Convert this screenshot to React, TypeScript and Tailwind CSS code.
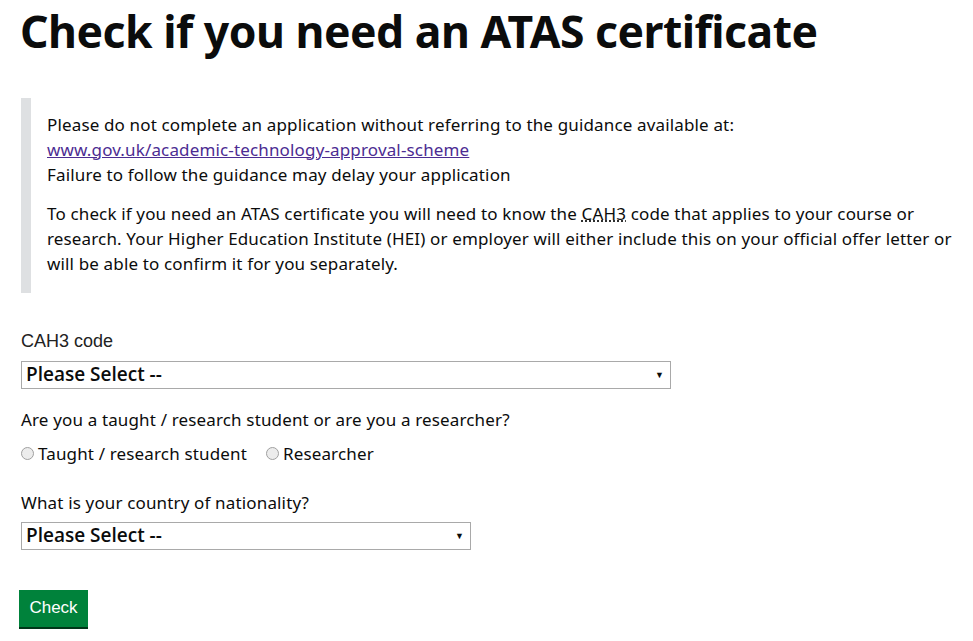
export default function App() {
  const body = { fontFamily: '"Noto Sans", Arial, sans-serif' };
  const arial = { fontFamily: '"Liberation Sans", Arial, sans-serif' };
  const sel = { fontFamily: '"Open Sans", sans-serif' };
  return (
    <div className="bg-white min-h-[641px] text-[#0b0c0c]" style={body}>
      <div className="pl-[20px] pr-[14px]">
        <h1 className="text-[44.5px] font-bold leading-[1] pt-[9px] tracking-[-0.5px] m-0">Check if you need an ATAS certificate</h1>
        <div className="mt-[44px] ml-[1px] border-l-[10px] border-[#dee0e2] pl-[16px] pt-[14px] pb-[17px] text-[17px] leading-[25px] tracking-[0.15px]">
          <p>
            Please do not complete an application without referring to the guidance available at:
            <br />
            <a href="#" className="text-[#4c2c92] underline">www.gov.uk/academic-technology-approval-scheme </a>
            <br />
            Failure to follow the guidance may delay your application
          </p>
          <p className="mt-[14px]">
            To check if you need an ATAS certificate you will need to know the{" "}
            <abbr className="underline decoration-dotted">CAH3</abbr> code that applies to your course or research. Your Higher Education Institute (HEI) or employer will either include this on your official offer letter or will be able to confirm it for you separately.
          </p>
        </div>
        <div className="mt-[36px] ml-[1px]">
          <label className="block text-[18px] leading-[25px] text-[#222]" style={arial}>CAH3 code</label>
          <div className="mt-[7px] w-[650px] h-[28px] border border-[#a9a9a9] flex items-center justify-between pl-[4px] pr-[6px]">
            <span className="text-[19px] font-semibold" style={sel}>Please Select --</span>
            <span className="text-[9px]">▼</span>
          </div>
          <div className="text-[17px] leading-[25px] tracking-[0.15px]">
            <p className="mt-[18px]">Are you a taught / research student or are you a researcher?</p>
            <div className="mt-[9px] flex items-center">
              <span className="w-[13px] h-[13px] rounded-full border border-[#a0a0a0] bg-[#ececec] mr-[4px]"></span>
              <span>Taught / research student</span>
              <span className="w-[13px] h-[13px] rounded-full border border-[#a0a0a0] bg-[#ececec] ml-[19px] mr-[4px]"></span>
              <span>Researcher</span>
            </div>
            <p className="mt-[24px]">What is your country of nationality?</p>
          </div>
          <div className="mt-[7px] w-[450px] h-[28px] border border-[#a9a9a9] flex items-center justify-between pl-[4px] pr-[6px]">
            <span className="text-[19px] font-semibold" style={sel}>Please Select --</span>
            <span className="text-[9px]">▼</span>
          </div>
          <button className="mt-[40px] -ml-[2px] bg-[#00823b] text-white text-[17px] w-[69px] h-[37px] shadow-[0_2px_0_#003618]" style={arial}>Check</button>
        </div>
      </div>
    </div>
  );
}
